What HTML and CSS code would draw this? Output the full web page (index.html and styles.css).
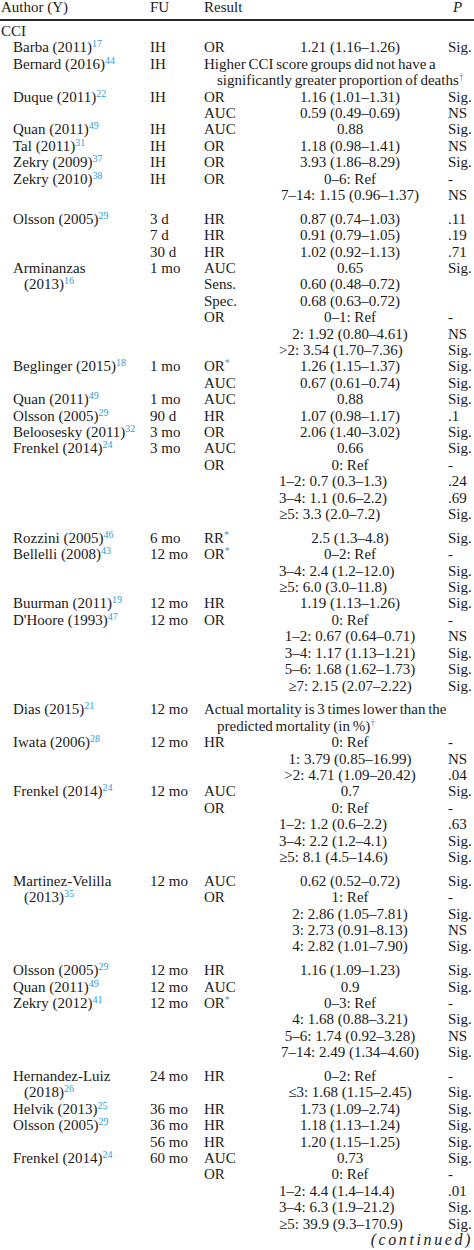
FILE: index.html
```html
<!DOCTYPE html>
<html lang="en">
<head>
<meta charset="utf-8">
<title>CCI table</title>
<link rel="stylesheet" href="styles.css">
</head>
<body>
<div class="page">
  <div class="hdr">
    <span class="a0">Author (Y)</span><span class="f">FU</span><span class="m">Result</span><span class="v"></span><span class="p ph"><i>P</i></span>
  </div>
  <div class="rule"></div>
  <div class="sec">CCI</div>
  <div class="rows">
    <div class="r"><span class="a">Barba (2011)<sup>17</sup></span><span class="f">IH</span><span class="m">OR</span><span class="v">1.21 (1.16–1.26)</span><span class="p">Sig.</span></div>
    <div class="r"><span class="a">Bernard (2016)<sup>44</sup></span><span class="f">IH</span><span class="span">Higher CCI score groups did not have a</span></div>
    <div class="r"><span class="a"></span><span class="f"></span><span class="span2">significantly greater proportion of deaths<sup>†</sup></span></div>
    <div class="r"><span class="a">Duque (2011)<sup>22</sup></span><span class="f">IH</span><span class="m">OR</span><span class="v">1.16 (1.01–1.31)</span><span class="p">Sig.</span></div>
    <div class="r"><span class="a"></span><span class="f"></span><span class="m">AUC</span><span class="v">0.59 (0.49–0.69)</span><span class="p">NS</span></div>
    <div class="r"><span class="a">Quan (2011)<sup>49</sup></span><span class="f">IH</span><span class="m">AUC</span><span class="v">0.88</span><span class="p">Sig.</span></div>
    <div class="r"><span class="a">Tal (2011)<sup>31</sup></span><span class="f">IH</span><span class="m">OR</span><span class="v">1.18 (0.98–1.41)</span><span class="p">NS</span></div>
    <div class="r"><span class="a">Zekry (2009)<sup>37</sup></span><span class="f">IH</span><span class="m">OR</span><span class="v">3.93 (1.86–8.29)</span><span class="p">Sig.</span></div>
    <div class="r"><span class="a">Zekry (2010)<sup>38</sup></span><span class="f">IH</span><span class="m">OR</span><span class="v">0–6: Ref</span><span class="p">-</span></div>
    <div class="r"><span class="a"></span><span class="f"></span><span class="m"></span><span class="v">7–14: 1.15 (0.96–1.37)</span><span class="p">NS</span></div>

    <div class="r gap"><span class="a">Olsson (2005)<sup>29</sup></span><span class="f">3 d</span><span class="m">HR</span><span class="v">0.87 (0.74–1.03)</span><span class="p">.11</span></div>
    <div class="r"><span class="a"></span><span class="f">7 d</span><span class="m">HR</span><span class="v">0.91 (0.79–1.05)</span><span class="p">.19</span></div>
    <div class="r"><span class="a"></span><span class="f">30 d</span><span class="m">HR</span><span class="v">1.02 (0.92–1.13)</span><span class="p">.71</span></div>
    <div class="r"><span class="a">Arminanzas</span><span class="f">1 mo</span><span class="m">AUC</span><span class="v">0.65</span><span class="p">Sig.</span></div>
    <div class="r"><span class="a a2">(2013)<sup>16</sup></span><span class="f"></span><span class="m">Sens.</span><span class="v">0.60 (0.48–0.72)</span><span class="p"></span></div>
    <div class="r"><span class="a"></span><span class="f"></span><span class="m">Spec.</span><span class="v">0.68 (0.63–0.72)</span><span class="p"></span></div>
    <div class="r"><span class="a"></span><span class="f"></span><span class="m">OR</span><span class="v">0–1: Ref</span><span class="p">-</span></div>
    <div class="r"><span class="a"></span><span class="f"></span><span class="m"></span><span class="v">2: 1.92 (0.80–4.61)</span><span class="p">NS</span></div>
    <div class="r"><span class="a"></span><span class="f"></span><span class="m"></span><span class="v l">&gt;2: 3.54 (1.70–7.36)</span><span class="p">Sig.</span></div>
    <div class="r"><span class="a">Beglinger (2015)<sup>18</sup></span><span class="f">1 mo</span><span class="m">OR<sup>*</sup></span><span class="v">1.26 (1.15–1.37)</span><span class="p">Sig.</span></div>
    <div class="r"><span class="a"></span><span class="f"></span><span class="m">AUC</span><span class="v">0.67 (0.61–0.74)</span><span class="p">Sig.</span></div>
    <div class="r"><span class="a">Quan (2011)<sup>49</sup></span><span class="f">1 mo</span><span class="m">AUC</span><span class="v">0.88</span><span class="p">Sig.</span></div>
    <div class="r"><span class="a">Olsson (2005)<sup>29</sup></span><span class="f">90 d</span><span class="m">HR</span><span class="v">1.07 (0.98–1.17)</span><span class="p">.1</span></div>
    <div class="r"><span class="a">Beloosesky (2011)<sup>32</sup></span><span class="f">3 mo</span><span class="m">OR</span><span class="v">2.06 (1.40–3.02)</span><span class="p">Sig.</span></div>
    <div class="r"><span class="a">Frenkel (2014)<sup>24</sup></span><span class="f">3 mo</span><span class="m">AUC</span><span class="v">0.66</span><span class="p">Sig.</span></div>
    <div class="r"><span class="a"></span><span class="f"></span><span class="m">OR</span><span class="v">0: Ref</span><span class="p">-</span></div>
    <div class="r"><span class="a"></span><span class="f"></span><span class="m"></span><span class="v l">1–2: 0.7 (0.3–1.3)</span><span class="p">.24</span></div>
    <div class="r"><span class="a"></span><span class="f"></span><span class="m"></span><span class="v l">3–4: 1.1 (0.6–2.2)</span><span class="p">.69</span></div>
    <div class="r"><span class="a"></span><span class="f"></span><span class="m"></span><span class="v l">≥5: 3.3 (2.0–7.2)</span><span class="p">Sig.</span></div>

    <div class="r gap"><span class="a">Rozzini (2005)<sup>46</sup></span><span class="f">6 mo</span><span class="m">RR<sup>*</sup></span><span class="v">2.5 (1.3–4.8)</span><span class="p">Sig.</span></div>
    <div class="r"><span class="a">Bellelli (2008)<sup>43</sup></span><span class="f">12 mo</span><span class="m">OR<sup>*</sup></span><span class="v">0–2: Ref</span><span class="p">-</span></div>
    <div class="r"><span class="a"></span><span class="f"></span><span class="m"></span><span class="v l">3–4: 2.4 (1.2–12.0)</span><span class="p">Sig.</span></div>
    <div class="r"><span class="a"></span><span class="f"></span><span class="m"></span><span class="v l">≥5: 6.0 (3.0–11.8)</span><span class="p">Sig.</span></div>
    <div class="r"><span class="a">Buurman (2011)<sup>19</sup></span><span class="f">12 mo</span><span class="m">HR</span><span class="v">1.19 (1.13–1.26)</span><span class="p">Sig.</span></div>
    <div class="r"><span class="a">D'Hoore (1993)<sup>47</sup></span><span class="f">12 mo</span><span class="m">OR</span><span class="v">0: Ref</span><span class="p">-</span></div>
    <div class="r"><span class="a"></span><span class="f"></span><span class="m"></span><span class="v">1–2: 0.67 (0.64–0.71)</span><span class="p">NS</span></div>
    <div class="r"><span class="a"></span><span class="f"></span><span class="m"></span><span class="v">3–4: 1.17 (1.13–1.21)</span><span class="p">Sig.</span></div>
    <div class="r"><span class="a"></span><span class="f"></span><span class="m"></span><span class="v">5–6: 1.68 (1.62–1.73)</span><span class="p">Sig.</span></div>
    <div class="r"><span class="a"></span><span class="f"></span><span class="m"></span><span class="v">≥7: 2.15 (2.07–2.22)</span><span class="p">Sig.</span></div>

    <div class="r gap"><span class="a">Dias (2015)<sup>21</sup></span><span class="f">12 mo</span><span class="span">Actual mortality is 3 times lower than the</span></div>
    <div class="r"><span class="a"></span><span class="f"></span><span class="span2">predicted mortality (in %)<sup>†</sup></span></div>
    <div class="r"><span class="a">Iwata (2006)<sup>28</sup></span><span class="f">12 mo</span><span class="m">HR</span><span class="v">0: Ref</span><span class="p">-</span></div>
    <div class="r"><span class="a"></span><span class="f"></span><span class="m"></span><span class="v">1: 3.79 (0.85–16.99)</span><span class="p">NS</span></div>
    <div class="r"><span class="a"></span><span class="f"></span><span class="m"></span><span class="v">&gt;2: 4.71 (1.09–20.42)</span><span class="p">.04</span></div>
    <div class="r"><span class="a">Frenkel (2014)<sup>24</sup></span><span class="f">12 mo</span><span class="m">AUC</span><span class="v">0.7</span><span class="p">Sig.</span></div>
    <div class="r"><span class="a"></span><span class="f"></span><span class="m">OR</span><span class="v">0: Ref</span><span class="p">-</span></div>
    <div class="r"><span class="a"></span><span class="f"></span><span class="m"></span><span class="v l">1–2: 1.2 (0.6–2.2)</span><span class="p">.63</span></div>
    <div class="r"><span class="a"></span><span class="f"></span><span class="m"></span><span class="v l">3–4: 2.2 (1.2–4.1)</span><span class="p">Sig.</span></div>
    <div class="r"><span class="a"></span><span class="f"></span><span class="m"></span><span class="v l">≥5: 8.1 (4.5–14.6)</span><span class="p">Sig.</span></div>

    <div class="r gap"><span class="a">Martinez-Velilla</span><span class="f">12 mo</span><span class="m">AUC</span><span class="v">0.62 (0.52–0.72)</span><span class="p">Sig.</span></div>
    <div class="r"><span class="a a2">(2013)<sup>35</sup></span><span class="f"></span><span class="m">OR</span><span class="v">1: Ref</span><span class="p">-</span></div>
    <div class="r"><span class="a"></span><span class="f"></span><span class="m"></span><span class="v">2: 2.86 (1.05–7.81)</span><span class="p">Sig.</span></div>
    <div class="r"><span class="a"></span><span class="f"></span><span class="m"></span><span class="v">3: 2.73 (0.91–8.13)</span><span class="p">NS</span></div>
    <div class="r"><span class="a"></span><span class="f"></span><span class="m"></span><span class="v">4: 2.82 (1.01–7.90)</span><span class="p">Sig.</span></div>

    <div class="r gap"><span class="a">Olsson (2005)<sup>29</sup></span><span class="f">12 mo</span><span class="m">HR</span><span class="v">1.16 (1.09–1.23)</span><span class="p">Sig.</span></div>
    <div class="r"><span class="a">Quan (2011)<sup>49</sup></span><span class="f">12 mo</span><span class="m">AUC</span><span class="v">0.9</span><span class="p">Sig.</span></div>
    <div class="r"><span class="a">Zekry (2012)<sup>41</sup></span><span class="f">12 mo</span><span class="m">OR<sup>*</sup></span><span class="v">0–3: Ref</span><span class="p">-</span></div>
    <div class="r"><span class="a"></span><span class="f"></span><span class="m"></span><span class="v">4: 1.68 (0.88–3.21)</span><span class="p">Sig.</span></div>
    <div class="r"><span class="a"></span><span class="f"></span><span class="m"></span><span class="v">5–6: 1.74 (0.92–3.28)</span><span class="p">NS</span></div>
    <div class="r"><span class="a"></span><span class="f"></span><span class="m"></span><span class="v">7–14: 2.49 (1.34–4.60)</span><span class="p">Sig.</span></div>

    <div class="r gap"><span class="a">Hernandez-Luiz</span><span class="f">24 mo</span><span class="m">HR</span><span class="v">0–2: Ref</span><span class="p">-</span></div>
    <div class="r"><span class="a a2">(2018)<sup>26</sup></span><span class="f"></span><span class="m"></span><span class="v">≤3: 1.68 (1.15–2.45)</span><span class="p">Sig.</span></div>
    <div class="r"><span class="a">Helvik (2013)<sup>25</sup></span><span class="f">36 mo</span><span class="m">HR</span><span class="v">1.73 (1.09–2.74)</span><span class="p">Sig.</span></div>
    <div class="r"><span class="a">Olsson (2005)<sup>29</sup></span><span class="f">36 mo</span><span class="m">HR</span><span class="v">1.18 (1.13–1.24)</span><span class="p">Sig.</span></div>
    <div class="r"><span class="a"></span><span class="f">56 mo</span><span class="m">HR</span><span class="v">1.20 (1.15–1.25)</span><span class="p">Sig.</span></div>
    <div class="r"><span class="a">Frenkel (2014)<sup>24</sup></span><span class="f">60 mo</span><span class="m">AUC</span><span class="v">0.73</span><span class="p">Sig.</span></div>
    <div class="r"><span class="a"></span><span class="f"></span><span class="m">OR</span><span class="v">0: Ref</span><span class="p">-</span></div>
    <div class="r"><span class="a"></span><span class="f"></span><span class="m"></span><span class="v l">1–2: 4.4 (1.4–14.4)</span><span class="p">.01</span></div>
    <div class="r"><span class="a"></span><span class="f"></span><span class="m"></span><span class="v l">3–4: 6.3 (1.9–21.2)</span><span class="p">Sig.</span></div>
    <div class="r"><span class="a"></span><span class="f"></span><span class="m"></span><span class="v l">≥5: 39.9 (9.3–170.9)</span><span class="p">Sig.</span></div>
  </div>
  <div class="cont">(continued)</div>
</div>
</body>
</html>
```

FILE: styles.css
```css
html, body {
  margin: 0;
  padding: 0;
  background: #ffffff;
}

body {
  width: 474px;
  overflow: hidden;
}

.page {
  width: 478px;
  font-family: "Liberation Serif", "Times New Roman", serif;
  font-size: 15px;
  line-height: 16.4px;
  color: #1a1a1a;
}

.hdr,
.r {
  display: grid;
  grid-template-columns: 150px 54px 75px 142px 1fr;
  white-space: nowrap;
}

.hdr {
  line-height: 14px;
}

.a0 {
  padding-left: 1px;
}

.rule {
  height: 2px;
  background: #2a2a2a;
  margin-top: 4.5px;
}

.sec {
  margin-top: 2.4px;
  padding-left: 1px;
}

.a {
  padding-left: 13px;
}

.a2 {
  padding-left: 24px;
}

.v {
  text-align: center;
}

.v.l {
  text-align: left;
}

.p {
  padding-left: 27px;
}

.ph {
  padding-left: 32px;
}

.span {
  grid-column: 3 / -1;
  word-spacing: -1px;
}

.span2 {
  grid-column: 3 / -1;
  padding-left: 13px;
  word-spacing: -1px;
}

.gap {
  margin-top: 7.4px;
}

sup {
  font-size: 10px;
  line-height: 0;
  vertical-align: 5.5px;
  color: #2f9bd6;
}

.cont {
  text-align: right;
  font-style: italic;
  font-size: 16px;
  letter-spacing: 2.6px;
  line-height: 16px;
  margin-right: 5px;
}
```
